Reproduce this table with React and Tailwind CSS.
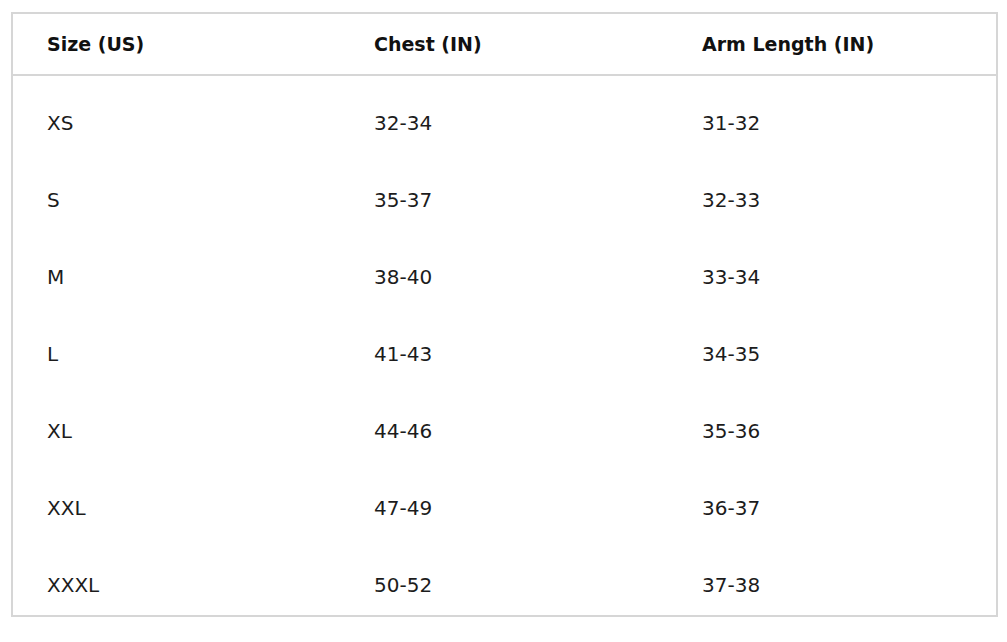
const rows = [
  ["XS", "32-34", "31-32"],
  ["S", "35-37", "32-33"],
  ["M", "38-40", "33-34"],
  ["L", "41-43", "34-35"],
  ["XL", "44-46", "35-36"],
  ["XXL", "47-49", "36-37"],
  ["XXXL", "50-52", "37-38"],
];

export default function App() {
  return (
    <div
      className="w-[1007px] h-[642px] bg-white pt-[12px] pl-[11px]"
      style={{ fontFamily: "'DejaVu Sans', 'Noto Sans', sans-serif" }}
    >
      <div className="w-[987px] h-[605px] border-2 border-[#d6d6d6]">
        {/* Header */}
        <div className="grid grid-cols-[327px_328px_1fr] h-[62px] items-center border-b-2 border-[#d6d6d6] text-[19px] font-bold text-[#111] pl-[34px]">
          <div>Size (US)</div>
          <div>Chest (IN)</div>
          <div>Arm Length (IN)</div>
        </div>

        {/* Rows */}
        {rows.map((r) => (
          <div
            key={r[0]}
            className="grid grid-cols-[327px_328px_1fr] h-[77px] pt-[35px] text-[20px] leading-[24px] text-[#1c1c1c] pl-[34px]"
          >
            <div>{r[0]}</div>
            <div>{r[1]}</div>
            <div>{r[2]}</div>
          </div>
        ))}
      </div>
    </div>
  );
}
